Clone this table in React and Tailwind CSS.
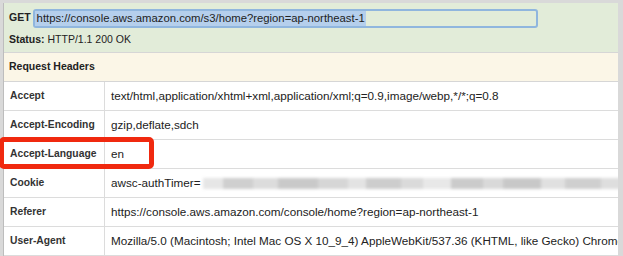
export default function App() {
  const rows = [
    ["Accept", "text/html,application/xhtml+xml,application/xml;q=0.9,image/webp,*/*;q=0.8"],
    ["Accept-Encoding", "gzip,deflate,sdch"],
    ["Accept-Language", "en"],
    ["Cookie", null],
    ["Referer", "https://console.aws.amazon.com/console/home?region=ap-northeast-1"],
    ["User-Agent", "Mozilla/5.0 (Macintosh; Intel Mac OS X 10_9_4) AppleWebKit/537.36 (KHTML, like Gecko) Chrome/36.0.1985.125 Safari/537.36"],
  ];
  return (
    <div className="relative w-[623px] h-[256px] overflow-hidden bg-[#d9d9d9] pl-[3px] pt-[3px] pr-[5px] font-['Liberation_Sans',sans-serif] text-[#222]">
      <div className="h-full bg-white border-l border-[#bdbdbd]">
        <div className="h-[50px] bg-[#e2ecd9] border-b border-[#d6d6d6] pl-[5px] pt-[6px]">
          <div className="flex items-center h-[18px]">
            <span className="text-[10.5px] font-bold">GET</span>
            <div className="ml-[2px] w-[505px] h-[19px] rounded-[3px] border-2 border-[#90b6de] flex items-center">
              <span className="bg-[#b5cfec] text-[11.3px] leading-[15px] pl-[2px] pr-[1px] whitespace-nowrap">https://console.aws.amazon.com/s3/home?region=ap-northeast-1</span>
            </div>
          </div>
          <div className="mt-[5px] text-[10.5px] leading-[14px]">
            <span className="font-bold">Status:</span> HTTP/1.1 200 OK
          </div>
        </div>
        <div className="h-[29px] bg-[#fbf6e7] border-b border-[#d6d6d6] pl-[5px] flex items-center text-[10.5px] font-bold">
          Request Headers
        </div>
        {rows.map(([k, v]) => (
          <div key={k} className="h-[29px] flex border-b border-[#dcdcdc]">
            <div className="w-[101px] shrink-0 border-r border-[#dcdcdc] pl-[6px] flex items-center text-[10.3px] font-bold text-[#333]">{k}</div>
            <div className="flex-1 pl-[6px] flex items-center text-[11.7px] whitespace-nowrap overflow-hidden">
              {v !== null ? (
                v
              ) : (
                <>
                  <span>awsc-authTimer=</span>
                  <div className="ml-[2px] flex h-[11px] blur-[1.5px]">
                    <span className="w-[20px] bg-[#e6e6e6]" />
                    <span className="w-[30px] bg-[#cfcfcf]" />
                    <span className="w-[25px] bg-[#dcdcdc]" />
                    <span className="w-[40px] bg-[#c9c9c9]" />
                    <span className="w-[30px] bg-[#d6d6d6]" />
                    <span className="w-[18px] bg-[#e3e3e3]" />
                    <span className="w-[35px] bg-[#cdcdcd]" />
                    <span className="w-[22px] bg-[#dadada]" />
                    <span className="w-[28px] bg-[#e8e8e8]" />
                    <span className="w-[32px] bg-[#cbcbcb]" />
                    <span className="w-[20px] bg-[#d9d9d9]" />
                    <span className="w-[38px] bg-[#c8c8c8]" />
                    <span className="w-[24px] bg-[#e0e0e0]" />
                    <span className="w-[36px] bg-[#cfcfcf]" />
                    <span className="w-[20px] bg-[#dedede]" />
                  </div>
                </>
              )}
            </div>
          </div>
        ))}
      </div>
      <div className="absolute left-[-1px] top-[137px] w-[155px] h-[32px] border-[5px] border-[#f0290f] rounded-[5px]" />
    </div>
  );
}
